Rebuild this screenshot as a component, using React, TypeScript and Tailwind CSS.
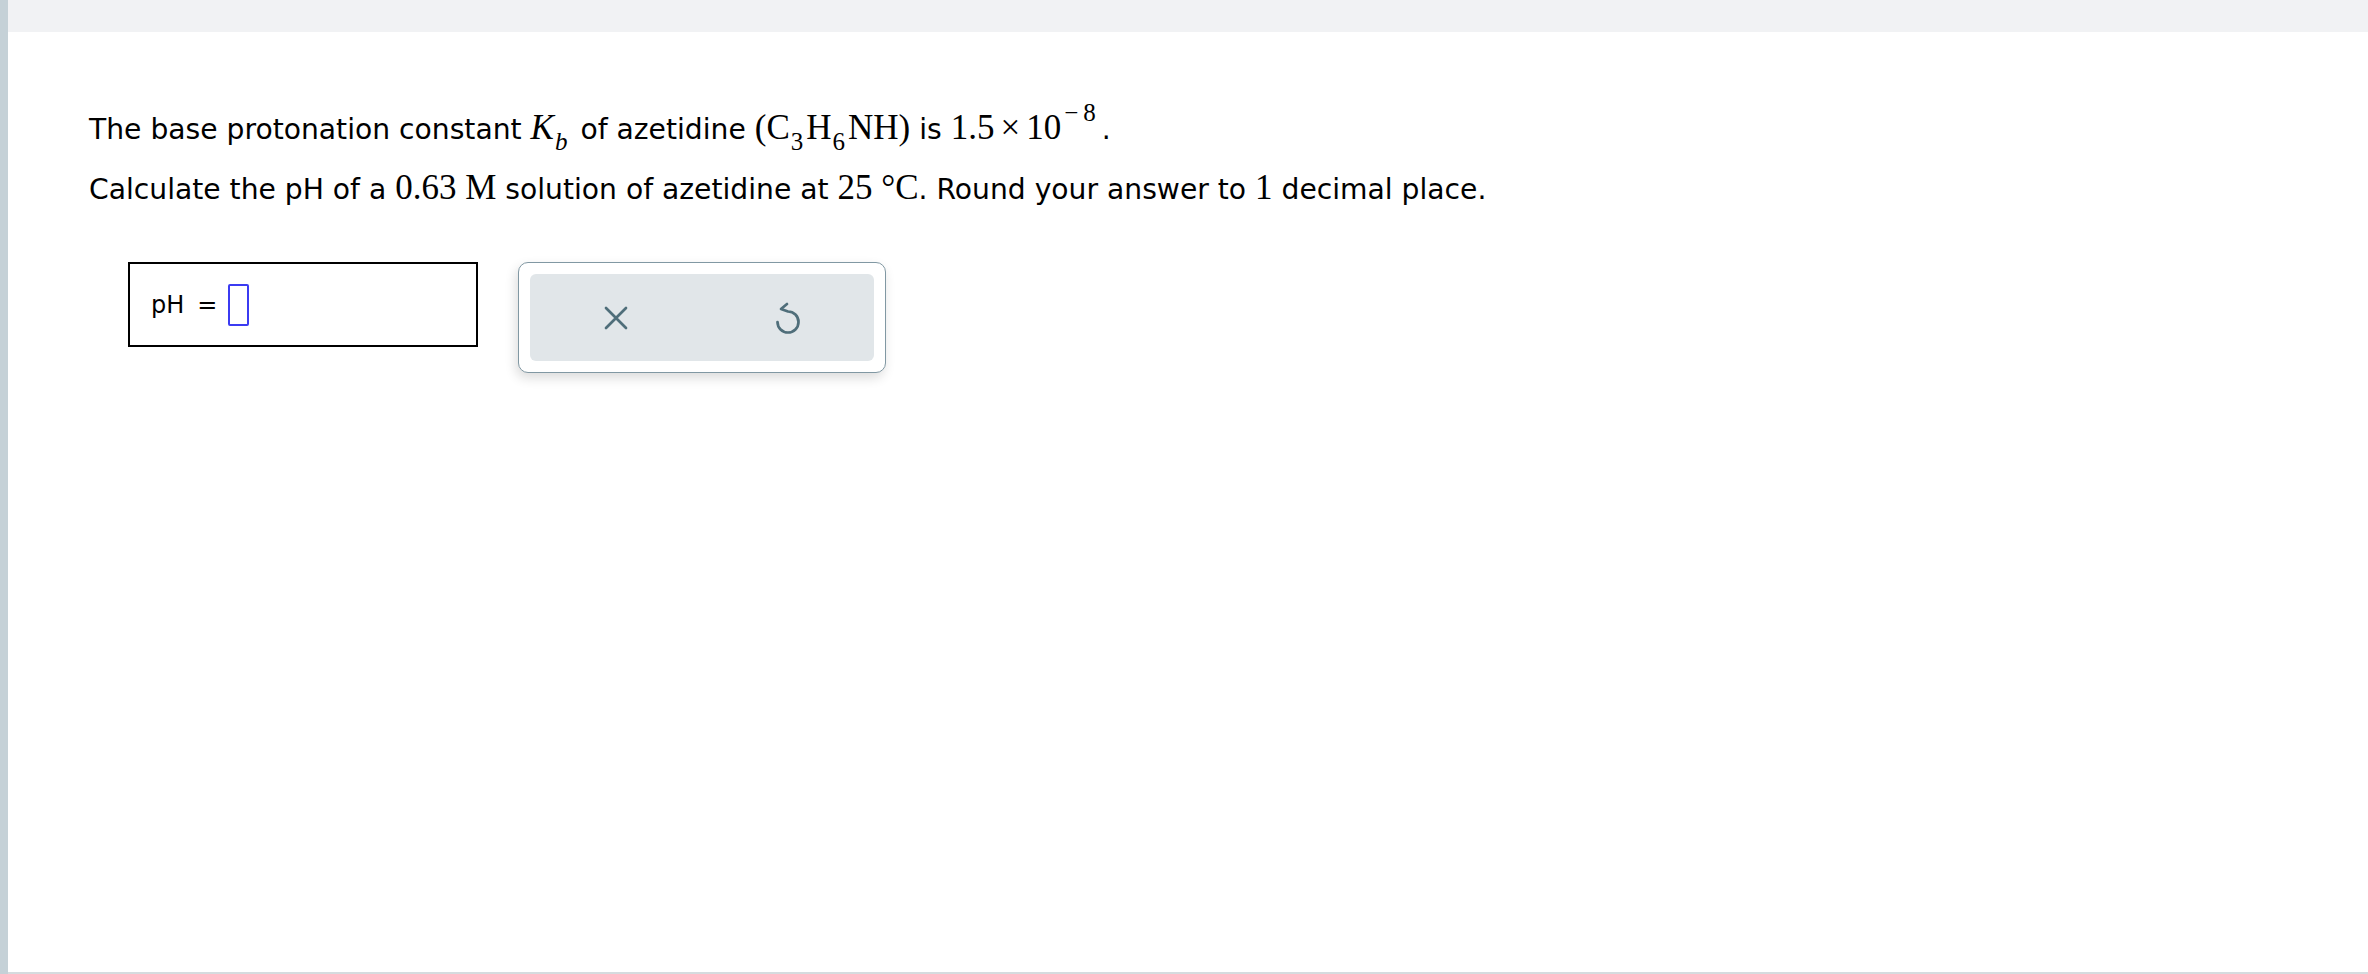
import React from 'react';

const sans = "font-['DejaVu_Sans','Verdana',sans-serif]";
const serif = "font-['Liberation_Serif','Times_New_Roman',serif]";

// math pieces rendered in serif, like the MathJax output of the original
const M: React.FC<{ children: React.ReactNode; italic?: boolean }> = ({ children, italic }) => (
  <span className={`${serif} text-[35px] leading-none ${italic ? 'italic' : ''}`}>{children}</span>
);

const Sub: React.FC<{ children: React.ReactNode; italic?: boolean }> = ({ children, italic }) => (
  <span className={`${serif} relative top-[11px] ml-[1px] mr-[3px] text-[25px] leading-none ${italic ? 'italic' : ''}`}>{children}</span>
);

const Sup: React.FC<{ children: React.ReactNode }> = ({ children }) => (
  <span className={`${serif} relative -top-[18px] ml-[3px] text-[25px] leading-none`}>{children}</span>
);

const ClearIcon = () => (
  <svg width="26" height="26" viewBox="0 0 26 26" fill="none" stroke="#4f6e7a" strokeWidth="2.7" strokeLinecap="round">
    <path d="M3 3 L23 23 M23 3 L3 23" />
  </svg>
);

const ResetIcon = () => (
  <svg width="26" height="32" viewBox="0 0 26 32" fill="none" stroke="#4f6e7a" strokeWidth="2.7" strokeLinecap="round" strokeLinejoin="round">
    <path d="M12 2 L6 7 L13 9.5 A10.5 10.5 0 1 1 2.5 20" />
  </svg>
);

export default function App() {
  return (
    <div className={`flex h-[974px] w-full bg-white text-black ${sans}`}>
      {/* rail on the left */}
      <div className="w-[8px] shrink-0 bg-[#c5d1d7]" />

      <div className="flex flex-1 flex-col border-b-2 border-[#d5dbde]">
        <div className="h-[32px] shrink-0 bg-[#f1f2f4]" />

        <div className="flex flex-col pl-[81px] pt-[78px]">
          {/* question */}
          <p className="text-[28.2px] leading-[40px] whitespace-nowrap">
            The base protonation constant{' '}
            <M italic>K</M>
            <Sub italic>b</Sub>
            <span className="ml-[10px]">of azetidine</span>{' '}
            <M>
              (C<Sub>3</Sub>H<Sub>6</Sub>NH)
            </M>{' '}
            is{' '}
            <M>
              1.5<span className="mx-[6px]">×</span>10
            </M>
            <Sup>
              −<span className="ml-[5px]">8</span>
            </Sup>
            <span className="ml-[6px]">.</span>
          </p>
          <p className="mt-[20px] text-[28.2px] leading-[40px] whitespace-nowrap">
            Calculate the pH of a <M>0.63 M</M> solution of azetidine at <M>25 °C</M>. Round your answer to{' '}
            <M>1</M> decimal place.
          </p>

          {/* answer row */}
          <div className="ml-[39px] mt-[52px] flex items-start gap-[40px]">
            <div className="flex h-[85px] w-[350px] items-center border-2 border-black pl-[21px]">
              <span className="text-[24px] leading-none">pH</span>
              <span className="ml-[13px] text-[24px] leading-none">=</span>
              <div className="ml-[11px] h-[42px] w-[21px] rounded-[2px] border-2 border-[#3b3bf2]" />
            </div>

            <div className="h-[111px] w-[368px] rounded-[10px] border-[1.5px] border-[#8198a3] bg-white p-[11px] shadow-[-2px_5px_12px_rgba(0,0,0,0.14)]">
              <div className="flex h-full items-center justify-around rounded-[6px] bg-[#e1e6e9]">
                <button className="flex h-[40px] w-[40px] items-center justify-center">
                  <ClearIcon />
                </button>
                <button className="flex h-[40px] w-[40px] items-center justify-center">
                  <ResetIcon />
                </button>
              </div>
            </div>
          </div>
        </div>
      </div>
    </div>
  );
}
